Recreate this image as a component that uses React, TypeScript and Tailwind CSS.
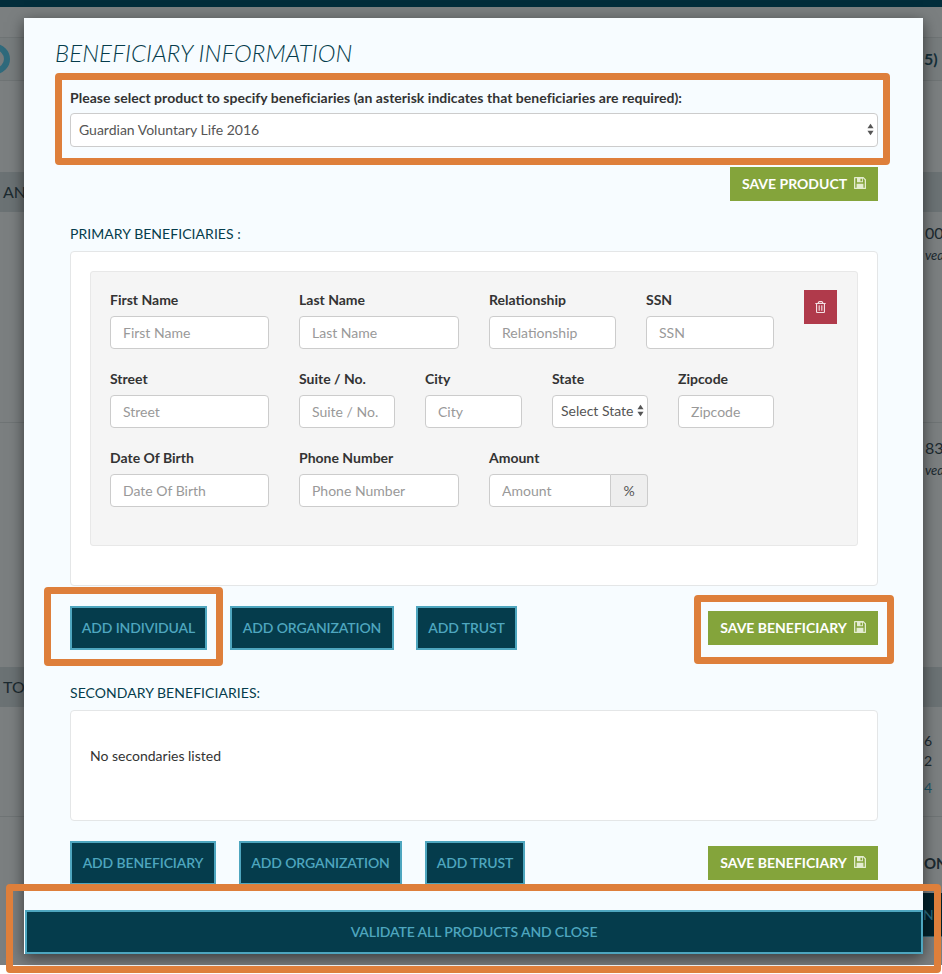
import React from "react";
import { FaRegTrashAlt } from "react-icons/fa";

const Arrows = ({ className }: { className: string }) => (
  <svg viewBox="0 0 8 13" className={className} fill="currentColor">
    <path d="M4 0 L7.5 5 L0.5 5 Z" />
    <path d="M4 13 L7.5 8 L0.5 8 Z" />
  </svg>
);

const Floppy = () => (
  <svg viewBox="0 0 14 14" className="w-[12px] h-[12px] text-[#e4ecd0] shrink-0" fill="currentColor">
    <path
      fillRule="evenodd"
      d="M1 0 H11 L14 3 V13 a1 1 0 0 1 -1 1 H1 a1 1 0 0 1 -1 -1 V1 a1 1 0 0 1 1 -1 Z M1.5 1.5 V12.5 H3 V8 H11 V12.5 H12.5 V3.6 L10.5 1.5 V6 H3.5 V1.5 Z M7.5 2 V5 H9.5 V2 Z"
    />
  </svg>
);

const labelCls = "text-[14px] leading-[20px] font-bold text-[#333] h-[26px]";

const Field = ({ label, w }: { label: string; w: string }) => (
  <div className={`flex flex-col ${w}`}>
    <label className={labelCls}>{label}</label>
    <input
      placeholder={label}
      className="w-full h-[33px] px-[12px] bg-white border border-[#ccc] rounded-[4px] text-[14px] placeholder:text-[#999] outline-none"
    />
  </div>
);

const TealButton = ({ children, w }: { children: React.ReactNode; w: string }) => (
  <button className={`${w} h-[44px] shrink-0 pb-[2px] bg-[#053c4c] border-2 border-[#4ea6bf] text-[#4ea6bf] text-[14px] font-semibold tracking-[-0.13px] flex items-center justify-center`}>
    {children}
  </button>
);

const SaveButton = ({ children, w }: { children: React.ReactNode; w: string }) => (
  <button className={`${w} h-[34px] shrink-0 pb-[2px] bg-[#84a43b] text-white text-[14px] font-bold flex items-center justify-center gap-[7px]`}>
    {children}
    <Floppy />
  </button>
);

const Frame = ({ className }: { className: string }) => (
  <div className={`absolute border-[7px] border-[#de7f3b] rounded-[4px] pointer-events-none ${className}`} />
);

export default function App() {
  return (
    <div className="relative w-[942px] h-[974px] overflow-hidden bg-white font-['Lato','Liberation_Sans',sans-serif]">
      {/* dimmed page behind the modal */}
      <div className="h-[965px] bg-[#7b7f80] flex flex-col text-[#1c2a30] text-[16px]">
        <div className="h-[7px] bg-[#022d3b] shrink-0" />
        <div className="h-[30px] shrink-0" />
        <div className="h-[44px] shrink-0 border-y border-[#6f7475] bg-[#777c7d] flex items-center justify-between">
          <svg viewBox="0 0 30 30" className="w-[30px] h-[30px] ml-[-20px] text-[#2f6a7c]" fill="none" stroke="currentColor" strokeWidth="6">
            <circle cx="15" cy="15" r="12" />
            <circle cx="15" cy="14" r="2" strokeWidth="3" />
          </svg>
          <span className="text-[#15303a] font-bold mr-[6px] whitespace-nowrap w-[12px]">5)</span>
        </div>
        <div className="h-[91px] shrink-0" />
        <div className="h-[40px] shrink-0 bg-[#6b7274] flex items-center pl-[3px]">AN</div>
        <div className="h-[210px] shrink-0 flex flex-col items-end pt-[10px] text-[16px] leading-[22px]">
          <span className="w-[18px] pl-[1px]">00</span>
          <span className="w-[18px] pl-[1px] italic text-[13px]">ved</span>
        </div>
        <div className="border-t border-[#6f7475] h-[245px] shrink-0 flex flex-col items-end pt-[14px] leading-[22px]">
          <span className="w-[18px] pl-[1px]">83</span>
          <span className="w-[18px] pl-[1px] italic text-[13px]">ved</span>
        </div>
        <div className="h-[40px] shrink-0 bg-[#6b7274] flex items-center pl-[3px]">TO</div>
        <div className="h-[110px] shrink-0 border-b border-[#6f7475] flex flex-col items-end pt-[24px] text-[14px] leading-[20px]">
          <span className="w-[18px]">6</span>
          <span className="w-[18px]">2</span>
          <span className="w-[18px] text-[#1f5566] mt-[7px]">4</span>
        </div>
        <div className="h-[56px] shrink-0 flex items-end justify-end font-bold text-[15px] leading-[20px]">
          <span className="w-[18px]">ON</span>
        </div>
        <div className="h-[20px] shrink-0" />
        <div className="h-[44px] shrink-0 flex justify-end">
          <div className="w-[19px] bg-[#02222c] border-b border-[#2f5f6f] text-[#2d6f83] text-[14px] flex items-center">N</div>
        </div>
      </div>

      {/* modal */}
      <div className="absolute left-[24px] top-[18px] w-[899px] h-[936px] bg-[#f7fcff] shadow-[0_4px_14px_rgba(0,0,0,0.55)] flex flex-col">
        <h1 className="ml-[31px] mt-[20px] h-[35px] text-[24px] leading-[30px] font-light italic text-[#053c4c] tracking-[0.08px]">
          BENEFICIARY INFORMATION
        </h1>
        <div className="flex-1 flex flex-col pl-[46px] pr-[45px]">
          <p className="mt-[16px] h-[24px] text-[14px] leading-[18px] font-bold text-[#333] tracking-[0.03px]">
            Please select product to specify beneficiaries (an asterisk indicates that beneficiaries are required):
          </p>
          <div className="relative h-[34px]">
            <select className="appearance-none w-full h-[34px] px-[8px] pb-[2px] bg-white border border-[#ccc] rounded-[4px] text-[14px] text-[#555]">
              <option>Guardian Voluntary Life 2016</option>
            </select>
            <Arrows className="absolute right-[4px] top-[10px] w-[7px] h-[13px] text-[#555]" />
          </div>
          <div className="mt-[20px] flex justify-end">
            <SaveButton w="w-[148px]">SAVE PRODUCT</SaveButton>
          </div>

          <p className="mt-[24px] h-[26px] text-[14px] leading-[18px] text-[#053c4c] tracking-[0.05px]">PRIMARY BENEFICIARIES :</p>
          <div className="h-[335px] shrink-0 bg-white border border-[#e4e6e7] rounded-[4px] p-[19px] pb-0">
            <div className="relative h-[275px] bg-[#f5f5f5] border border-[#e8e8e8] rounded-[3px] px-[19px] pt-[18px] flex flex-col gap-[20px]">
              <div className="flex gap-[30px]">
                <Field label="First Name" w="w-[159px]" />
                <Field label="Last Name" w="w-[160px]" />
                <Field label="Relationship" w="w-[127px]" />
                <Field label="SSN" w="w-[128px]" />
              </div>
              <div className="flex gap-[30px]">
                <Field label="Street" w="w-[159px]" />
                <Field label="Suite / No." w="w-[96px]" />
                <Field label="City" w="w-[97px]" />
                <div className="flex flex-col w-[96px]">
                  <label className={labelCls}>State</label>
                  <div className="relative h-[33px]">
                    <select className="appearance-none w-full h-[33px] pl-[8px] pb-[2px] bg-white border border-[#ccc] rounded-[4px] text-[14px] text-[#555]">
                      <option>Select State</option>
                    </select>
                    <Arrows className="absolute right-[4px] top-[9px] w-[7px] h-[13px] text-[#555]" />
                  </div>
                </div>
                <Field label="Zipcode" w="w-[96px]" />
              </div>
              <div className="flex gap-[30px]">
                <Field label="Date Of Birth" w="w-[159px]" />
                <Field label="Phone Number" w="w-[160px]" />
                <div className="flex flex-col w-[159px]">
                  <label className={labelCls}>Amount</label>
                  <div className="flex h-[33px]">
                    <input
                      placeholder="Amount"
                      className="w-[122px] h-[33px] px-[12px] bg-white border border-[#ccc] rounded-l-[4px] text-[14px] placeholder:text-[#999] outline-none"
                    />
                    <span className="w-[37px] h-[33px] bg-[#eee] border border-l-0 border-[#ccc] rounded-r-[4px] flex items-center justify-center text-[14px] text-[#555]">%</span>
                  </div>
                </div>
              </div>
              <button className="absolute left-[713px] top-[18px] w-[33px] h-[34px] bg-[#b03a4b] flex items-center justify-center">
                <FaRegTrashAlt className="w-[11px] h-[12px] text-[#f3dfe2]" />
              </button>
            </div>
          </div>

          <div className="mt-[20px] flex items-center">
            <TealButton w="w-[137px]">ADD INDIVIDUAL</TealButton>
            <div className="w-[23px]" />
            <TealButton w="w-[164px]">ADD ORGANIZATION</TealButton>
            <div className="w-[22px]" />
            <TealButton w="w-[101px]">ADD TRUST</TealButton>
            <div className="flex-1" />
            <SaveButton w="w-[170px]">SAVE BENEFICIARY</SaveButton>
          </div>

          <p className="mt-[34px] h-[26px] text-[14px] leading-[18px] text-[#053c4c] tracking-[0.05px]">SECONDARY BENEFICIARIES:</p>
          <div className="h-[111px] shrink-0 bg-white border border-[#e4e6e7] rounded-[4px] pl-[19px] pt-[35px] text-[14px] leading-[20px] text-[#333]">
            No secondaries listed
          </div>

          <div className="mt-[20px] flex items-center">
            <TealButton w="w-[146px]">ADD BENEFICIARY</TealButton>
            <div className="w-[23px]" />
            <TealButton w="w-[163px]">ADD ORGANIZATION</TealButton>
            <div className="w-[23px]" />
            <TealButton w="w-[100px]">ADD TRUST</TealButton>
            <div className="flex-1" />
            <SaveButton w="w-[170px]">SAVE BENEFICIARY</SaveButton>
          </div>
        </div>
        <button className="ml-[1px] h-[44px] shrink-0 pb-[2px] bg-[#053c4c] border-2 border-[#4ea6bf] text-[#4ea6bf] text-[14px] font-semibold tracking-[-0.13px]">
          VALIDATE ALL PRODUCTS AND CLOSE
        </button>
      </div>

      {/* annotation frames */}
      <Frame className="left-[55px] top-[73px] w-[835px] h-[92px]" />
      <Frame className="left-[44px] top-[587px] w-[179px] h-[79px]" />
      <Frame className="left-[694px] top-[595px] w-[200px] h-[69px]" />
      <Frame className="left-[6px] top-[884px] w-[935px] h-[89px]" />
    </div>
  );
}
